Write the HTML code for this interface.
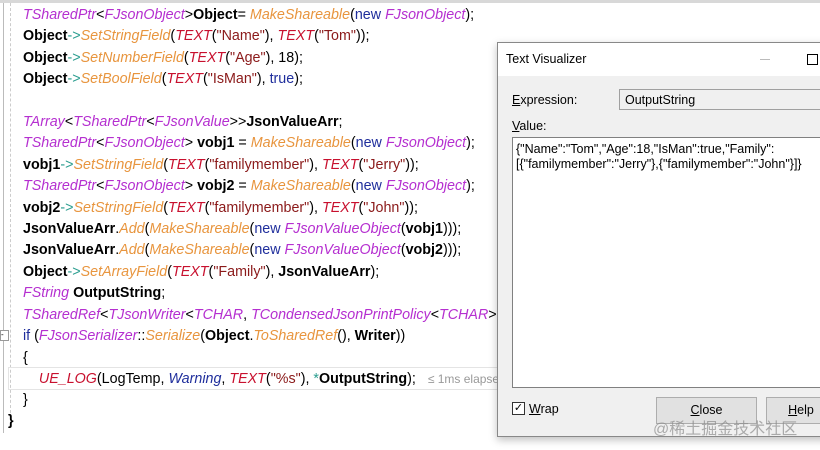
<!DOCTYPE html>
<html><head><meta charset="utf-8"><style>
body{margin:0;width:820px;height:450px;background:#fff;overflow:hidden;position:relative;font-family:"Liberation Sans",sans-serif}
.top{position:absolute;left:0;top:0;width:820px;height:3px;background:#d8d8d8}
.lb{position:absolute;left:3px;top:3px;width:1px;height:430px;background:#bbb}
.dg{position:absolute;left:10px;top:3px;height:415px;border-left:1px dashed #ccc}
.code{position:absolute;left:23px;top:4px;font-size:14.3px;line-height:21.4px;color:#000;white-space:pre}
.t{color:#b52fd0;font-style:italic}.f{color:#e8953e;font-style:italic}.m{color:#c8102e;font-style:italic}
.k{color:#1f2e9c}.b{font-weight:bold}.s{color:#8b1a1a}.a{color:#2a9d8f}.w{color:#1f2e9c;font-style:italic}
.hl{position:absolute;left:8px;top:367px;width:500px;height:21px;border:1px solid #e4e4e4;border-right:none}
.dlg{position:absolute;left:497px;top:42px;width:330px;height:393px;background:#f0f0f0;border:1px solid #888;box-shadow:0 3px 8px rgba(0,0,0,.25);font-size:12.5px;color:#000}
.tb{height:33px;background:#fff;position:relative}
.cb{position:absolute;left:121px;top:46px;width:210px;height:21px;background:#f0f0f0;border:1px solid #a0a0a0;box-sizing:border-box;padding:3px 5px}
.ta{position:absolute;left:14px;top:94px;width:320px;height:251px;background:#fff;border:1px solid #808080;box-sizing:border-box;padding:4px 3px;line-height:15px}
.btn{position:absolute;top:354px;height:27px;background:#e1e1e1;border:1px solid #adadad;box-sizing:border-box;text-align:center;line-height:25px}
</style></head><body>
<div class="top"></div><div class="lb"></div><div class="dg"></div><div class="hl"></div>
<div style="position:absolute;left:0;top:330px;width:7px;height:9px;border:1px solid #999;background:#fff;font-size:8px;line-height:8px">-</div>
<div class="code" style="top:5px"><span class="t">TSharedPtr</span>&lt;<span class="t">FJsonObject</span>&gt;<span class="b">Object</span>= <span class="f">MakeShareable</span>(<span class="k">new</span> <span class="t">FJsonObject</span>);
<span class="b">Object</span><span class="a">-&gt;</span><span class="f">SetStringField</span>(<span class="m">TEXT</span>(<span class="s">"Name"</span>), <span class="m">TEXT</span>(<span class="s">"Tom"</span>));
<span class="b">Object</span><span class="a">-&gt;</span><span class="f">SetNumberField</span>(<span class="m">TEXT</span>(<span class="s">"Age"</span>), 18);
<span class="b">Object</span><span class="a">-&gt;</span><span class="f">SetBoolField</span>(<span class="m">TEXT</span>(<span class="s">"IsMan"</span>), <span class="k">true</span>);

<span class="t">TArray</span>&lt;<span class="t">TSharedPtr</span>&lt;<span class="t">FJsonValue</span>&gt;&gt;<span class="b">JsonValueArr</span>;
<span class="t">TSharedPtr</span>&lt;<span class="t">FJsonObject</span>&gt; <span class="b">vobj1</span> = <span class="f">MakeShareable</span>(<span class="k">new</span> <span class="t">FJsonObject</span>);
<span class="b">vobj1</span><span class="a">-&gt;</span><span class="f">SetStringField</span>(<span class="m">TEXT</span>(<span class="s">"familymember"</span>), <span class="m">TEXT</span>(<span class="s">"Jerry"</span>));
<span class="t">TSharedPtr</span>&lt;<span class="t">FJsonObject</span>&gt; <span class="b">vobj2</span> = <span class="f">MakeShareable</span>(<span class="k">new</span> <span class="t">FJsonObject</span>);
<span class="b">vobj2</span><span class="a">-&gt;</span><span class="f">SetStringField</span>(<span class="m">TEXT</span>(<span class="s">"familymember"</span>), <span class="m">TEXT</span>(<span class="s">"John"</span>));
<span class="b">JsonValueArr</span>.<span class="f">Add</span>(<span class="f">MakeShareable</span>(<span class="k">new</span> <span class="t">FJsonValueObject</span>(<span class="b">vobj1</span>)));
<span class="b">JsonValueArr</span>.<span class="f">Add</span>(<span class="f">MakeShareable</span>(<span class="k">new</span> <span class="t">FJsonValueObject</span>(<span class="b">vobj2</span>)));
<span class="b">Object</span><span class="a">-&gt;</span><span class="f">SetArrayField</span>(<span class="m">TEXT</span>(<span class="s">"Family"</span>), <span class="b">JsonValueArr</span>);
<span class="t">FString</span> <span class="b">OutputString</span>;
<span class="t">TSharedRef</span>&lt;<span class="t">TJsonWriter</span>&lt;<span class="t">TCHAR</span>, <span class="t">TCondensedJsonPrintPolicy</span>&lt;<span class="t">TCHAR</span>&gt;&gt;&gt;
<span class="k">if</span> (<span class="t">FJsonSerializer</span>::<span class="f">Serialize</span>(<span class="b">Object</span>.<span class="f">ToSharedRef</span>(), <span class="b">Writer</span>))
{
    <span class="m">UE_LOG</span>(LogTemp, <span class="w">Warning</span>, <span class="m">TEXT</span>(<span class="s">"%s"</span>), <span class="a">*</span><span class="b">OutputString</span>);   <span style="color:#999;font-size:12px">≤ 1ms elapsed</span>
}
</div>
<div class="code" style="left:8px;top:411px"><span class="b">}</span></div>
<div class="dlg">
<div class="tb"><span style="position:absolute;left:8px;top:9px">Text Visualizer</span><span style="position:absolute;left:262px;top:16px;width:10px;height:1px;background:#bbb"></span><span style="position:absolute;left:309px;top:11px;width:9px;height:9px;border:1px solid #000"></span></div>
<span style="position:absolute;left:14px;top:50px"><u>E</u>xpression:</span>
<div class="cb">OutputString</div>
<span style="position:absolute;left:14px;top:76px"><u>V</u>alue:</span>
<div class="ta">{"Name":"Tom","Age":18,"IsMan":true,"Family":<br>[{"familymember":"Jerry"},{"familymember":"John"}]}</div>
<span style="position:absolute;left:14px;top:359px;width:11px;height:11px;border:1px solid #333;background:#fff;font-size:11px;line-height:11px;text-align:center">✓</span>
<span style="position:absolute;left:31px;top:359px"><u>W</u>rap</span>
<div class="btn" style="left:158px;width:101px"><u>C</u>lose</div>
<div class="btn" style="left:268px;width:70px"><u>H</u>elp</div>
<span style="position:absolute;left:155px;top:372px;font-size:16px;color:rgba(140,140,140,.7);font-family:'Liberation Sans','Noto Sans CJK SC',sans-serif">@稀土掘金技术社区</span>
</div>
</body></html>
